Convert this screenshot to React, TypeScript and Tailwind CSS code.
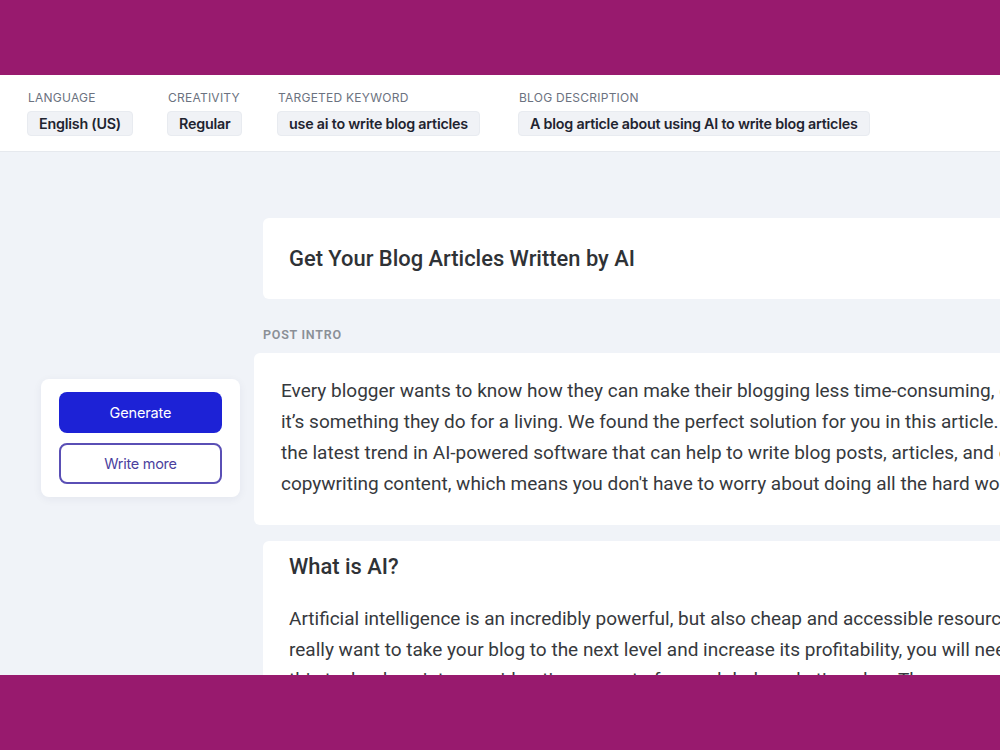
import React from "react";

const sans = { fontFamily: "Inter, 'Noto Sans', sans-serif" };
const roboto = { fontFamily: "Roboto, 'Noto Sans', sans-serif" };

function Field({ label, value }: { label: string; value: string }) {
  return (
    <div className="flex flex-col items-start">
      <div className="text-[12px] leading-[14px] tracking-[0.02em] text-[#6b7280] uppercase pl-[1px]">{label}</div>
      <div className="mt-[6px] h-[25px] px-[11px] rounded-[4px] bg-[#f0f2f6] border border-[#e8ebf0] flex items-center text-[14.3px] font-semibold text-[#1f2430] tracking-[-0.015em] whitespace-nowrap">
        {value}
      </div>
    </div>
  );
}

export default function App() {
  const intro = [
    "Every blogger wants to know how they can make their blogging less time-consuming, especially if",
    "it\u2019s something they do for a living. We found the perfect solution for you in this article. AI writing is",
    "the latest trend in AI-powered software that can help to write blog posts, articles, and other",
    "copywriting content, which means you don't have to worry about doing all the hard work yourself.",
  ];
  const ai = [
    "Artificial intelligence is an incredibly powerful, but also cheap and accessible resource. If you",
    "really want to take your blog to the next level and increase its profitability, you will need to take",
    "this technology into consideration as part of your global marketing plan. The more you use it,",
  ];
  return (
    <div className="w-[1000px] h-[750px] flex flex-col overflow-hidden bg-[#f0f3f8]" style={sans}>
      <div className="h-[75px] shrink-0 bg-[#981a6e]" />
      <div className="h-[77px] shrink-0 bg-white border-b border-[#e6e9ee] flex items-start pt-[16px] pl-[27px]">
        <div className="w-[140px]"><Field label="Language" value="English (US)" /></div>
        <div className="w-[110px]"><Field label="Creativity" value="Regular" /></div>
        <div className="w-[241px]"><Field label="Targeted Keyword" value="use ai to write blog articles" /></div>
        <div><Field label="Blog Description" value="A blog article about using AI to write blog articles" /></div>
      </div>
      <div className="flex-1 min-h-0 overflow-hidden flex relative">
        <div className="w-[254px] shrink-0 pl-[41px] pt-[227px]">
          <div className="w-[199px] h-[118px] bg-white rounded-[8px] shadow-[0_2px_10px_rgba(30,40,80,0.06)] px-[18px] pt-[13px] flex flex-col gap-[10px]">
            <button className="h-[41px] w-full rounded-[8px] bg-[#1d22d6] text-white text-[14.5px] tracking-[-0.01em]">Generate</button>
            <button className="h-[41px] w-full rounded-[8px] border-2 border-[#5a4fb5] bg-white text-[#4b3f9e] text-[14.5px] tracking-[-0.02em]">Write more</button>
          </div>
        </div>
        <div className="flex-1 min-w-0 pt-[66px]" style={roboto}>
          <div className="ml-[9px] w-[900px] h-[81px] bg-white rounded-[6px] flex items-center pl-[26px]">
            <h1 className="text-[21.9px] leading-[28px] font-medium text-[#2f3236]">Get Your Blog Articles Written by AI</h1>
          </div>
          <div className="ml-[9px] mt-[29px] text-[12.5px] font-semibold tracking-[0.06em] text-[#8a8f96] leading-[14px]">POST INTRO</div>
          <div className="mt-[11px] w-[900px] h-[172px] bg-white rounded-[6px] pl-[27px] pt-[22px]">
            {intro.map((l) => (
              <div key={l} className="whitespace-nowrap text-[19px] leading-[31px] text-[#36393d]">{l}</div>
            ))}
          </div>
          <div className="mt-[16px] ml-[9px] w-[900px] h-[200px] bg-white rounded-[6px] pl-[26px] pt-[12px]">
            <h2 className="text-[21.9px] font-medium text-[#2f3236] leading-[28px]">What is AI?</h2>
            <div className="mt-[23px]">
              {ai.map((l) => (
                <div key={l} className="whitespace-nowrap text-[19px] leading-[30.5px] text-[#36393d]">{l}</div>
              ))}
            </div>
          </div>
        </div>
      </div>
      <div className="h-[75px] shrink-0 bg-[#981a6e] relative z-10" />
    </div>
  );
}
